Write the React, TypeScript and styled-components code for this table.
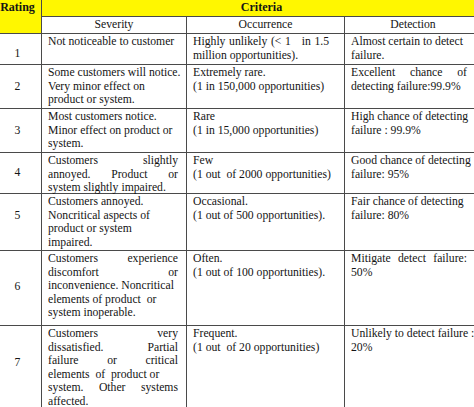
import React from "react";
import styled, { createGlobalStyle } from "styled-components";

const Global = createGlobalStyle`
  html, body { margin: 0; padding: 0; background: #ffffff; overflow: hidden; }
  body { width: 474px; height: 407px; }
`;

const Page = styled.div`
  width: 474px;
  height: 407px;
  overflow: hidden;
  background: #fff;
  font-family: "Liberation Serif", "Times New Roman", serif;
  font-size: 11.7px;
  color: #151515;
`;

const Grid = styled.div`
  display: grid;
  margin-left: -6px;
  grid-template-columns: 48px 145px 158px 137px;
  grid-template-rows: 17px 17px 31px 44px 44px 41px 57px 75px 90px;
  width: max-content;
`;

const BORDER = "#4a4a4a";

const Box = styled.div`
  box-sizing: border-box;
  border-right: 1px solid ${BORDER};
  border-bottom: 1px solid ${BORDER};
  min-width: 0;
`;

const RatingHead = styled(Box)`
  grid-row: 1 / span 2;
  background: #fff700;
  font-weight: bold;
  font-size: 12px;
  text-align: center;
  line-height: 15px;
`;

const CriteriaHead = styled(Box)`
  grid-column: 2 / span 3;
  background: #fff700;
  font-weight: bold;
  font-size: 12px;
  text-align: center;
  line-height: 15px;
`;

const SubHead = styled(Box)`
  text-align: center;
  line-height: 16px;
`;

const RatingCell = styled(Box)<{ $offset: number }>`
  text-align: center;
  line-height: 13.5px;
  padding-top: ${(p) => p.$offset}px;
`;

const Cell = styled(Box)<{ $padR: number }>`
  padding: 1px ${(p) => p.$padR}px 0 6px;
  line-height: 13.5px;
`;

const Line = styled.div<{ $j?: boolean }>`
  white-space: ${(p) => (p.$j ? "normal" : "pre")};
  text-align: ${(p) => (p.$j ? "justify" : "left")};
  text-align-last: ${(p) => (p.$j ? "justify" : "auto")};
`;

type L = string | { j: string };

interface Row {
  n: string;
  offset: number;
  sev: L[];
  occ: L[];
  det: L[];
}

const rows: Row[] = [
  {
    n: "1",
    offset: 13,
    sev: ["Not noticeable to customer"],
    occ: [{ j: "Highly unlikely (< 1 \u00a0 in 1.5" }, "million opportunities)."],
    det: ["Almost certain to detect", "failure."],
  },
  {
    n: "2",
    offset: 15,
    sev: ["Some customers will notice.", "Very minor effect on", "product or system."],
    occ: ["Extremely rare.", "(1 in 150,000 opportunities)"],
    det: [{ j: "Excellent chance of" }, "detecting failure:99.9%"],
  },
  {
    n: "3",
    offset: 15,
    sev: ["Most customers notice.", "Minor effect on product or", "system."],
    occ: ["Rare", "(1 in 15,000 opportunities)"],
    det: ["High chance of detecting", "failure : 99.9%"],
  },
  {
    n: "4",
    offset: 13,
    sev: [{ j: "Customers slightly" }, { j: "annoyed. Product or" }, "system slightly impaired."],
    occ: ["Few", "(1 out  of 2000 opportunities)"],
    det: ["Good chance of detecting", "failure: 95%"],
  },
  {
    n: "5",
    offset: 15,
    sev: ["Customers annoyed.", "Noncritical aspects of", "product or system", "impaired."],
    occ: ["Occasional.", "(1 out of 500 opportunities)."],
    det: ["Fair chance of detecting", "failure: 80%"],
  },
  {
    n: "6",
    offset: 29,
    sev: [
      { j: "Customers experience" },
      { j: "discomfort or" },
      "inconvenience. Noncritical",
      "elements of product  or",
      "system inoperable.",
    ],
    occ: ["Often.", "(1 out of 100 opportunities)."],
    det: [{ j: "Mitigate detect failure:" }, "50%"],
  },
  {
    n: "7",
    offset: 30,
    sev: [
      { j: "Customers very" },
      { j: "dissatisfied. Partial" },
      { j: "failure or critical" },
      "elements  of  product or",
      { j: "system. Other systems" },
      "affected.",
    ],
    occ: ["Frequent.", "(1 out  of 20 opportunities)"],
    det: ["Unlikely to detect failure :", "20%"],
  },
];

const renderLines = (lines: L[]) =>
  lines.map((l, i) =>
    typeof l === "string" ? (
      <Line key={i}>{l}</Line>
    ) : (
      <Line key={i} $j>
        {l.j}
      </Line>
    )
  );

export default function App() {
  return (
    <Page>
      <Global />
      <Grid>
        <RatingHead>Rating</RatingHead>
        <CriteriaHead>Criteria</CriteriaHead>
        <SubHead>Severity</SubHead>
        <SubHead>Occurrence</SubHead>
        <SubHead>Detection</SubHead>
        {rows.map((r) => (
          <React.Fragment key={r.n}>
            <RatingCell $offset={r.offset}>{r.n}</RatingCell>
            <Cell $padR={8}>{renderLines(r.sev)}</Cell>
            <Cell $padR={15}>{renderLines(r.occ)}</Cell>
            <Cell $padR={14}>{renderLines(r.det)}</Cell>
          </React.Fragment>
        ))}
      </Grid>
    </Page>
  );
}
